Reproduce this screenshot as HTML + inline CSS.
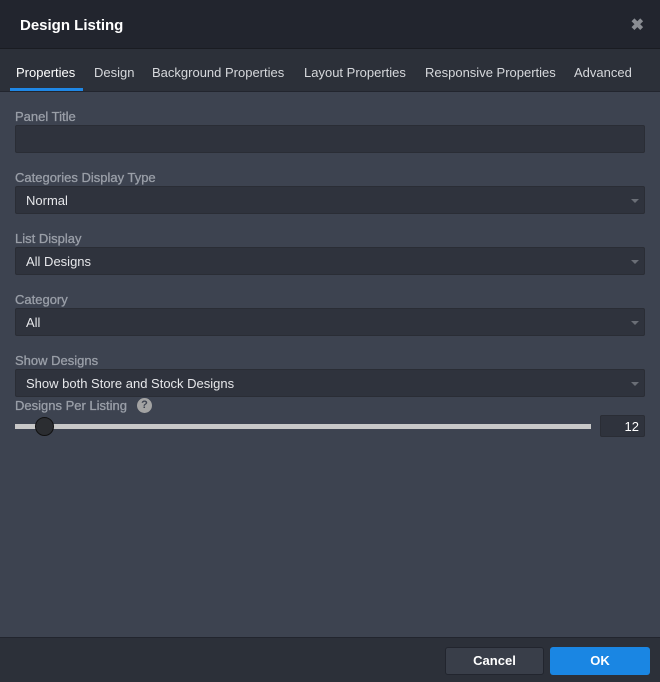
<!DOCTYPE html>
<html><head><style>
*{box-sizing:border-box;margin:0;padding:0}
body{width:660px;height:682px;background:#3d4350;font-family:"Liberation Sans",sans-serif;position:relative;overflow:hidden}
.hdr{position:absolute;left:0;top:0;width:660px;height:49px;background:#22252e;border-bottom:1px solid #1a1c22}
.hdr h1{position:absolute;left:20px;top:17px;font-size:15px;font-weight:bold;color:#fff}
.x{position:absolute;right:16px;top:15px;color:#8a8d93;font-size:16px;font-weight:bold}
.tabs{position:absolute;left:0;top:49px;width:660px;height:43px;background:#2c3039;border-bottom:1px solid #22252e}
.tab{position:absolute;top:16px;font-size:13px;color:#d6d8dc}
.tab.a{color:#fff}
.ul{position:absolute;left:10px;top:39px;width:73px;height:3px;background:#1f87e5}
.lbl{position:absolute;left:15px;font-size:13px;color:#9a9fa8;-webkit-text-stroke:0.3px #9a9fa8}
.in{position:absolute;left:15px;width:630px;height:28px;background:#2f333d;border:1px solid #2a2d35;border-radius:2px;color:#e6e7ea;font-size:13px;padding:6px 0 0 10px}
.in .car{position:absolute;right:5px;top:12px;border:4px solid transparent;border-top:4px solid #6a6e76}
.track{position:absolute;left:15px;top:424px;width:576px;height:5px;background:#c8c8c8}
.thumb{position:absolute;left:35px;top:417px;width:19px;height:19px;border-radius:50%;background:#2b2d31;border:1px solid #111}
.num{position:absolute;left:600px;top:415px;width:45px;height:22px;background:#2f333d;border:1px solid #2a2d35;border-radius:2px;color:#fff;font-size:13px;text-align:right;padding:3px 5px 0 0}
.q{position:absolute;left:137px;top:398px;width:15px;height:15px;border-radius:50%;background:#a3a3a3;color:#3d4350;font-size:11px;font-weight:bold;text-align:center;line-height:15px}
.ftr{position:absolute;left:0;top:637px;width:660px;height:45px;background:#2c3039;border-top:1px solid #22252e}
.btn{position:absolute;top:9px;height:28px;border-radius:3px;font-size:13px;font-weight:bold;color:#fff;text-align:center;line-height:28px}
</style></head><body>
<div class="hdr"><h1>Design Listing</h1><div class="x">✖</div></div>
<div class="tabs">
<div class="tab a" style="left:16px">Properties</div>
<div class="tab" style="left:94px">Design</div>
<div class="tab" style="left:152px">Background Properties</div>
<div class="tab" style="left:304px">Layout Properties</div>
<div class="tab" style="left:425px">Responsive Properties</div>
<div class="tab" style="left:574px">Advanced</div>
<div class="ul"></div>
</div>
<div class="lbl" style="top:109px">Panel Title</div>
<div class="in" style="top:125px"></div>
<div class="lbl" style="top:170px">Categories Display Type</div>
<div class="in" style="top:186px">Normal<div class="car"></div></div>
<div class="lbl" style="top:231px">List Display</div>
<div class="in" style="top:247px">All Designs<div class="car"></div></div>
<div class="lbl" style="top:292px">Category</div>
<div class="in" style="top:308px">All<div class="car"></div></div>
<div class="lbl" style="top:353px">Show Designs</div>
<div class="in" style="top:369px">Show both Store and Stock Designs<div class="car"></div></div>
<div class="lbl" style="top:398px">Designs Per Listing</div>
<div class="q">?</div>
<div class="track"></div><div class="thumb"></div>
<div class="num">12</div>
<div class="ftr">
<div class="btn" style="left:445px;width:99px;background:#393e49;border:1px solid #22252e;line-height:26px">Cancel</div>
<div class="btn" style="left:550px;width:100px;background:#1a86e3">OK</div>
</div>
</body></html>
